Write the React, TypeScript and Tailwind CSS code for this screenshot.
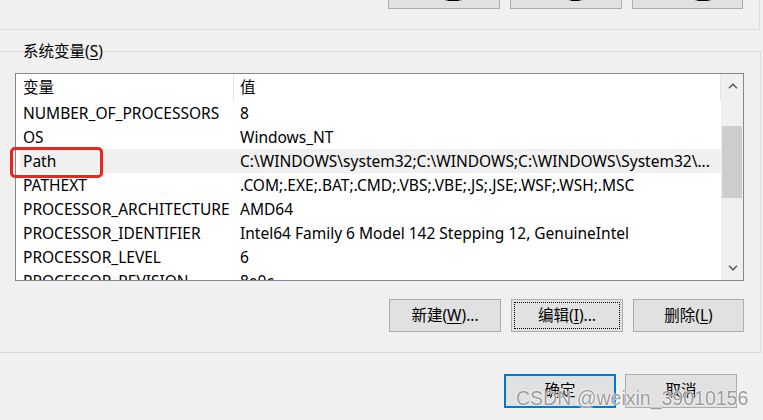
import React from 'react';

const font = { fontFamily: '"Noto Sans", "Noto Sans CJK SC", sans-serif' };

type Row = { name: string; value: string; selected?: boolean };

const rows: Row[] = [
    { name: 'NUMBER_OF_PROCESSORS', value: '8' },
    { name: 'OS', value: 'Windows_NT' },
    { name: 'Path', value: 'C:\\WINDOWS\\system32;C:\\WINDOWS;C:\\WINDOWS\\System32\\...', selected: true },
    { name: 'PATHEXT', value: '.COM;.EXE;.BAT;.CMD;.VBS;.VBE;.JS;.JSE;.WSF;.WSH;.MSC' },
    { name: 'PROCESSOR_ARCHITECTURE', value: 'AMD64' },
    { name: 'PROCESSOR_IDENTIFIER', value: 'Intel64 Family 6 Model 142 Stepping 12, GenuineIntel' },
    { name: 'PROCESSOR_LEVEL', value: '6' },
    { name: 'PROCESSOR_REVISION', value: '8e0c' },
];

const Btn = ({
    label,
    hot,
    rest,
    w = 'w-[112px]',
    focus,
}: {
    label: string;
    hot: string;
    rest: string;
    w?: string;
    focus?: boolean;
}) => (
    <button
        className={
            'h-[33px] shrink-0 bg-[#e1e1e1] border border-[#adadad] text-[15.5px] text-black flex items-center justify-center ' +
            w +
            (focus ? ' outline-1 outline-dotted outline-black outline-offset-[-4px]' : '')
        }
    >
        {label}(<span className="underline underline-offset-2">{hot}</span>){rest}
    </button>
);

const ChevronUp = () => (
    <svg width="10" height="6" viewBox="0 0 10 6">
        <path d="M1 5.2 L5 1.2 L9 5.2" fill="none" stroke="#606060" strokeWidth="1.6" />
    </svg>
);

const ChevronDown = () => (
    <svg width="10" height="6" viewBox="0 0 10 6">
        <path d="M1 0.8 L5 4.8 L9 0.8" fill="none" stroke="#606060" strokeWidth="1.6" />
    </svg>
);

export default function App() {
    return (
        <div className="relative w-[763px] h-[420px] overflow-hidden bg-[#f0f0f0] text-black" style={font}>
            {/* user variables group, mostly scrolled off */}
            <div className="w-[760px] h-[30px] overflow-hidden border-b border-r border-[#dcdcdc] flex justify-end pr-[16px]">
                <div className="-mt-[24px] flex gap-[10px]">
                    <Btn label="新建" hot="N" rest="..." />
                    <Btn label="编辑" hot="E" rest="..." />
                    <Btn label="删除" hot="D" rest="" w="w-[111px]" />
                </div>
            </div>

            {/* system variables */}
            <fieldset className="mt-[11px] w-[760px] border-t border-r border-b border-[#dcdcdc] pl-[15px] pr-[16px] pb-[20px]">
                <legend className="ml-[8px] text-[15.5px] leading-[20px]">
                    系统变量(<span className="underline underline-offset-2">S</span>)
                </legend>

                <div className="mt-[12px] w-[729px] h-[208px] border border-[#828790] bg-white flex">
                    <div className="flex-1 flex flex-col overflow-hidden text-[15.5px]">
                        <div className="h-[27px] shrink-0 flex">
                            <div className="w-[218px] shrink-0 pl-[7px] border-r border-[#e5e5e5] flex items-center">变量</div>
                            <div className="flex-1 pl-[6px] border-r border-[#e5e5e5] flex items-center">值</div>
                        </div>
                        {rows.map((r) => (
                            <div
                                key={r.name}
                                className={
                                    'h-[24px] shrink-0 flex items-center pt-[1px] whitespace-nowrap' +
                                    (r.selected ? ' bg-[#f0f0f0] shadow-[inset_4px_0_0_#fff]' : '')
                                }
                            >
                                <div className="w-[218px] shrink-0 pl-[7px] overflow-hidden">{r.name}</div>
                                <div className="flex-1 pl-[6px] overflow-hidden">{r.value}</div>
                            </div>
                        ))}
                    </div>
                    <div className="w-[22px] shrink-0 bg-[#f0f0f0] flex flex-col">
                        <div className="h-[24px] flex items-center justify-center pl-[1px]">
                            <ChevronUp />
                        </div>
                        <div className="flex-1 px-[1px] pt-[28px]">
                            <div className="h-[72px] bg-[#cdcdcd]" />
                        </div>
                        <div className="h-[24px] flex items-center justify-center pl-[1px]">
                            <ChevronDown />
                        </div>
                    </div>
                </div>

                <div className="mt-[18px] flex justify-end gap-[10px]">
                    <Btn label="新建" hot="W" rest="..." />
                    <Btn label="编辑" hot="I" rest="..." focus />
                    <Btn label="删除" hot="L" rest="" w="w-[111px]" />
                </div>
            </fieldset>

            <div className="mt-[21px] flex justify-end gap-[9px] pr-[26px]">
                <button className="w-[112px] h-[34px] bg-[#e1e1e1] border-2 border-[#0078d7] text-[15.5px]">确定</button>
                <button className="w-[112px] h-[34px] bg-[#e1e1e1] border border-[#adadad] text-[15.5px]">取消</button>
            </div>

            {/* annotation */}
            <div className="absolute left-[10px] top-[147px] w-[93px] h-[31px] border-[3px] border-[#e8281e] rounded-[5px]" />

            {/* watermark */}
            <div
                className="absolute left-[516px] top-[389px] text-[19.5px] leading-none text-[rgba(110,110,110,0.7)] [text-shadow:0_0_1px_#fff,0_0_1px_#fff,0_0_2px_#fff]"
                style={{ fontFamily: '"Liberation Sans", Arial, sans-serif' }}
            >
                CSDN @weixin_39010156
            </div>
        </div>
    );
}
